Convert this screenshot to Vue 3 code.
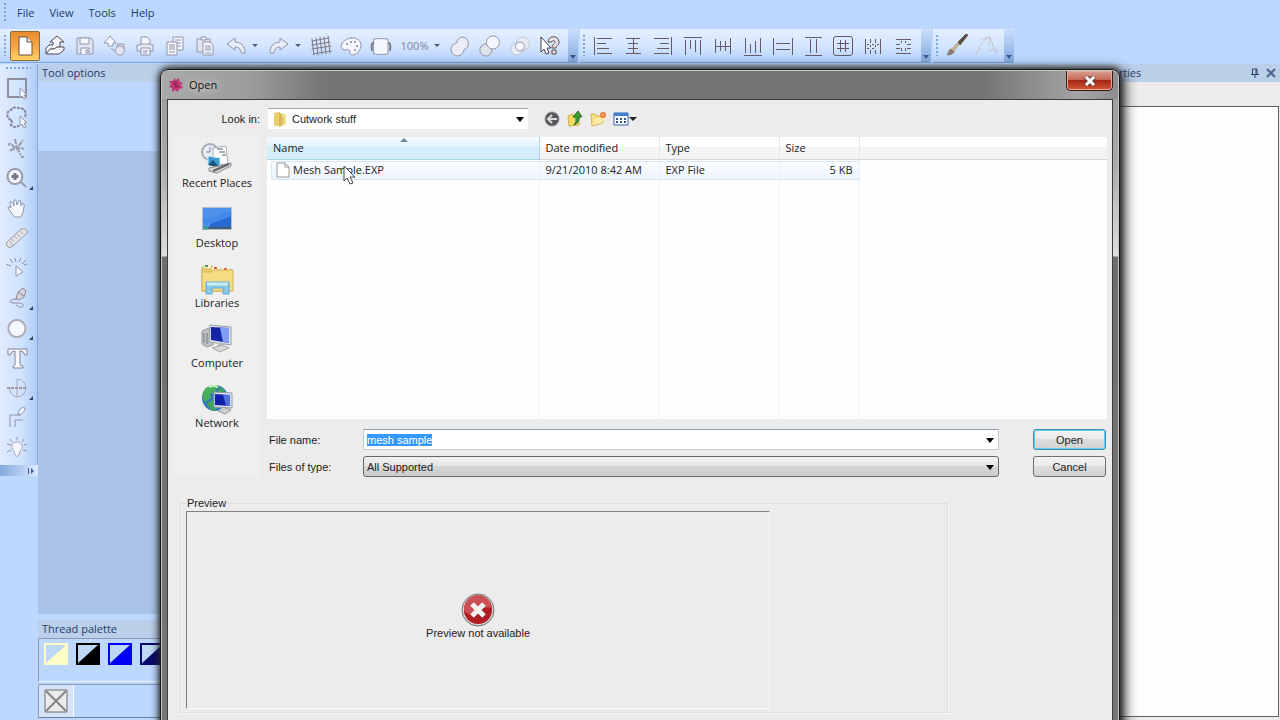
<script setup>
import {onMounted, ref} from "vue";

const menus=['File','View','Tools','Help']

// 每个图标由若干路径组成: d 路径, f 填充, s 描边
const G='#9294a8'
const W='#f4f7fd'
const D='#655a68'

const fileIcons=[
  {name:'Open design',parts:[{d:'M1 18V12L4 9H8V6H5L12 0L19 6H15V10L11 13H6L4 16',f:W,s:'#554650'},{d:'M1 18L5 13H9L12 11H19V14L14 18Z',f:W,s:'#554650'}]},
  {name:'Save',parts:[{d:'M2 2H16L18 4V18H2Z',f:'#dfe5f2',s:G},{d:'M5 2H14V8H5Z',f:W,s:G},{d:'M6 18V12H14V18M11 14H13V17H11Z',f:W,s:G}]},
  {name:'Convert',parts:[{d:'M-1 7L5 0L11 7H8V10H3V7Z',f:W,s:G},{d:'M6 12L10 15',s:G},{d:'M12 8H19V13H12Z',f:'#d6dbe8',s:G},{d:'M15 10A4.5 4.5 0 1 1 14.9 10Z',f:'#e2e6f2',s:G}]},
  {name:'Print',parts:[{d:'M6 8V1H12L15 4V8',f:W,s:G},{d:'M2 9H5L6 8H15L16 9H18V15H2Z',f:'#e6eaf4',s:G},{d:'M6 12H15V19H6Z',f:W,s:G},{d:'M8 15H13M8 17H12',s:G}]},
  {name:'Copy',parts:[{d:'M8 1H18V14H8Z',f:W,s:G},{d:'M10 4H16M10 7H16M10 10H16',s:G},{d:'M2 6H12V19H2Z',f:W,s:G},{d:'M4 9H10M4 11H10M4 13H10M4 16H10',s:G}]},
  {name:'Paste',parts:[{d:'M2 3H15V16H2Z',f:'#dfe4f1',s:G},{d:'M6 1H11V4H6Z',f:W,s:G},{d:'M8 6H15L18 9V19H8Z',f:W,s:G},{d:'M10 10H16M10 12H16M10 14H16M10 17H16',s:G}]}
]
const undoIcons=[
  {name:'Undo',parts:[{d:'M1 8L9 2V6C15 6 19 10 19 17H15C15 13 13 11 9 11V14Z',f:'#e9edf7',s:G}]},
  {name:'Redo',parts:[{d:'M19 8L11 2V6C5 6 1 10 1 17H5C5 13 7 11 11 11V14Z',f:'#e9edf7',s:G}]}
]
const viewIcons=[
  {name:'Grid',parts:[{d:'M5 2L7 19M9 1L11 18M13 1L15 18M17 0L19 17M1 5L18 2M1 9L19 6M1 13L20 10M2 18L20 15M1 3L3 19',s:'#7d7a88'}]},
  {name:'Colors',parts:[{d:'M10 2C16 1 20 5 20 9C20 14 16 19 11 19C8 19 10 15 8 14C6 13 4 15 1 13C-2 9 3 3 10 2Z',f:W,s:G},{d:'M6 8h.1M10 6h.1M14 6h.1M16 10h.1M14 14h.1',s:'#8b8d9e',w:2}]},
  {name:'Hoop',parts:[{d:'M3 3Q10 2 17 3V18Q10 19 3 18Z',f:W,s:G},{d:'M2 7Q0 8 1 14M18 7Q20 8 19 14',s:'#777a8c',w:2}]}
]
const shapeIcons=[
  {name:'Weld',parts:[{d:'M13 1A6.5 6.5 0 0 1 14 13.5A6.5 6.5 0 1 1 6.5 7A6.5 6.5 0 0 1 13 1Z',f:'#e9ecf3',s:G}]},
  {name:'Exclude',parts:[{d:'M6 8A6 6 0 1 1 5.9 8Z',f:'#dfe3ec',s:G},{d:'M13 0A6.5 6.5 0 1 1 12.9 0Z',f:W,s:G}]},
  {name:'Intersect',parts:[{d:'M13 1A6.5 6.5 0 1 1 12.9 1ZM7 7A6 6 0 1 1 6.9 7Z',f:'#e6eaf4',s:'#c2c5d4'},{d:'M10 6A4.5 4.5 0 1 1 9.9 6Z',f:W,s:G}]},
  {name:'Help pointer',parts:[{d:'M8 6C8 -1 19 -1 19 6C19 10 16 9 16 12H12C12 8 15 8 15 6S12 4 12 6ZM12 14H16V18H12Z',f:'#e6e1e4',s:'#5b4b52'},{d:'M1 1V16L4 13L6 18L9 17L7 12H11Z',f:'#fff',s:'#4a3d44'}]}
]
const alignIcons=[
  {name:'Align left',parts:[{d:'M1.5 1V19M4 2.5H19M4 7.5H13M4 12.5H16M4 17.5H19',s:D}]},
  {name:'Align center',parts:[{d:'M3 2.5H17M5 7.5H15M5 12.5H15M3 17.5H18M10.5 3V17',s:D}]},
  {name:'Align right',parts:[{d:'M18.5 1V19M1 2.5H16M7 7.5H16M4 12.5H16M1 17.5H16',s:D}]},
  {name:'Align top',parts:[{d:'M1 1.5H19M2.5 4V19M7.5 4V13M12.5 4V16M17.5 4V19',s:D}]},
  {name:'Align middle',parts:[{d:'M2.5 3V17M7.5 5V15M12.5 5V15M17.5 2V18M3 10.5H17',s:D}]},
  {name:'Align bottom',parts:[{d:'M1 19.5H19M2.5 2V17M7.5 8V17M12.5 5V17M17.5 2V17',s:D}]},
  {name:'Same width',parts:[{d:'M.5 2V19M19.5 2V19M3 7.5H17M3 13.5H17',s:D}]},
  {name:'Same height',parts:[{d:'M2 1.5H19M2 19.5H19M7.5 3V17M13.5 3V17',s:D}]},
  {name:'Center in hoop',parts:[{d:'M3 .5H17Q19.5 .5 19.5 3V17Q19.5 19.5 17 19.5H3Q.5 19.5 .5 17V3Q.5 .5 3 .5ZM4 7.5H16M4 12.5H16M7.5 4V16M12.5 4V16',s:D}]},
  {name:'Space across',parts:[{d:'M2.5 3V18M7.5 3V7M7.5 9V11M7.5 14V18M12.5 3V7M12.5 9V11M12.5 14V18M17.5 3V18M4 8.5H6M9 8.5H11M14 8.5H16M4 12.5H6M9 12.5H11',s:D}]},
  {name:'Space down',parts:[{d:'M3 3.5H18M3 8.5H7M14 8.5H18M3 12.5H7M14 12.5H18M3 17.5H18M8.5 5V7M12.5 5V7M8.5 12V15M12.5 12V15',s:D}]}
]
const penIcons=[
  {name:'Brush',parts:[{d:'M1 19C3 17 2 14 5 13L8 15C8 18 4 19 1 19Z',f:'#8d7862',s:'#8d8178'},{d:'M6 13L11 7L13 9L8 15Z',f:'#c8b98f',s:'#b6ab93'},{d:'M12 6L20 -2L22 -1L14 9Z',f:'#5b4c42',s:'#6c5e55'}]},
  {name:'Stitch',parts:[{d:'M0 18Q8 2 14 1M5 3L14 1L13 10M14 1L20 18M12 16Q20 10 22 17',s:'#c5c3ca'}]}
]
const sideIcons=[
  {name:'Rectangle select',parts:[{d:'M1 1H19V19H1Z',s:'#8d8e9f',w:2},{d:'M13 10V20L15 18L17 21L19 20L17 17H20Z',f:W,s:G}]},
  {name:'Freehand select',parts:[{d:'M4 12C-1 10 -1 3 4 2C6 -2 10 0 12 0C17 0 20 4 18 9M4 12L5 14L4 17L7 19L12 18',s:'#85869a',w:2,dash:'3 1'},{d:'M13 8V18L15 16L17 20L19 19L17 15H20Z',f:W,s:G}]},
  {name:'Point',parts:[{d:'M8 1L10 10L16 2M1 6L3 7M3 13Q9 8 17 11M8 10L3 5M10 10L14 17M14 19h3',s:'#9c9bac',w:2,dash:'5 1'}]},
  {name:'Zoom',more:true,parts:[{d:'M8 1A7.5 7.5 0 1 1 7.9 1ZM14 14L19 19',f:W,s:'#9a9bab',w:2},{d:'M8 5V12M4.5 8.5H11.5',s:'#777789',w:3}]},
  {name:'Pan',parts:[{d:'M6 17L1 10Q1 7 4 10L3 4Q5 2 7 8L7 2Q9 0 10 7L12 2Q14 1 14 8L16 5Q18 5 17 9Q17 14 14 19H8Z',f:W,s:G}]},
  {name:'Measure',parts:[{d:'M-1 15L14 1Q19 0 21 4L6 18Q1 22 -1 15Z',f:'#e2e3e9',s:'#9a98a3'},{d:'M4 11L7 13M7 8L10 11M10 6L13 9M13 3L16 6M6 18L3 13',s:'#aaa8b0'}]},
  {name:'Click',parts:[{d:'M9 8V18L16 14Z',f:W,s:G},{d:'M6 5L3 1M9 4L8 0M12 4L14 0M15 6L19 2M4 8L-1 6M17 7L20 6',s:'#8a899d'}]},
  {name:'Digitize',more:true,parts:[{d:'M9 11L11 4L16 0L19 3L17 9L12 12Z',f:'#d6d3d9',s:'#8a889a'},{d:'M11 4L17 8M9 11C1 12 2 15 7 15S18 15 16 18S11 18 9 17',s:'#8a889a'}]},
  {name:'Ellipse',more:true,parts:[{d:'M10 2A8.5 8.5 0 1 1 9.9 2Z',f:W,s:'#aeacb6',w:2}]},
  {name:'Text',parts:[{d:'M1 1H20V7H18Q17 3 13 3V16Q13 18 16 18V20H6V18Q8 18 8 16V3Q4 3 3 7H1Z',f:W,s:'#85829a'}]},
  {name:'Arc',more:true,parts:[{d:'M10 1V19M10 1A9 9 0 0 1 10 19A8 8 0 0 1 3 10',s:'#a9a9b8'},{d:'M0 10H20',s:'#9d9bac',w:2,dash:'3 1'}]},
  {name:'Corner',parts:[{d:'M3 19V7H14M8 19V12H16',s:G},{d:'M11 7L12 3Q15 -2 18 0Q18 5 11 7Z',f:W,s:G}]},
  {name:'Ideas',parts:[{d:'M8 17L7 13C3 9 5 4 10 4S17 9 13 13L12 17Q10 20 8 17Z',f:W,s:'#a9a9b8'},{d:'M10 -1V2M3 1L5 4M17 1L15 4M0 6L4 7M20 6L17 7M0 14L4 12M20 13L16 12',s:G}]}
]

const places=['Recent Places','Desktop','Libraries','Computer','Network']
const threads=[
  {name:'Cream',color:'#fdfdc6'},
  {name:'Black',color:'#000000'},
  {name:'Blue',color:'#0000f4'},
  {name:'Navy',color:'#0a0a6c'}
]
const files=[{name:'Mesh Sample.EXP',date:'9/21/2010 8:42 AM',type:'EXP File',size:'5 KB'}]

const fileName=ref('mesh sample')
const nameInput=ref(null)
onMounted(()=>{
  nameInput.value.focus()
  nameInput.value.select()
})
</script>

<template>
  <div class="app">
    <nav class="menubar">
      <span class="grip"></span>
      <button v-for="item in menus" :key="item" class="menu">{{ item }}</button>
    </nav>

    <!--    工具栏-->
    <div class="toolbars">
      <div class="toolbar">
        <span class="grip"></span>
        <button class="tool tool-active" aria-label="New">
          <svg width="20" height="20" viewBox="0 0 20 20"><path d="M4 1H12L17 6V19H4Z" fill="#fff" stroke="#6b5148"/><path d="M12 1V6H17" fill="#eee" stroke="#6b5148"/></svg>
        </button>
        <button v-for="icon in fileIcons" :key="icon.name" class="tool" :aria-label="icon.name">
          <svg class="icon" viewBox="0 0 20 20"><path v-for="(p,i) in icon.parts" :key="i" :d="p.d" :fill="p.f||'none'" :stroke="p.s"/></svg>
        </button>
        <button v-for="icon in undoIcons" :key="icon.name" class="tool split" :aria-label="icon.name">
          <svg class="icon" viewBox="0 0 20 20"><path v-for="(p,i) in icon.parts" :key="i" :d="p.d" :fill="p.f||'none'" :stroke="p.s"/></svg>
          <i class="caret"></i>
        </button>
        <button v-for="icon in viewIcons" :key="icon.name" class="tool" :aria-label="icon.name">
          <svg class="icon" viewBox="0 0 20 20"><path v-for="(p,i) in icon.parts" :key="i" :d="p.d" :fill="p.f||'none'" :stroke="p.s" :stroke-width="p.w||1" stroke-linecap="round"/></svg>
        </button>
        <button class="tool zoom">100%<i class="caret"></i></button>
        <button v-for="icon in shapeIcons" :key="icon.name" class="tool" :aria-label="icon.name">
          <svg class="icon" viewBox="0 0 20 20"><path v-for="(p,i) in icon.parts" :key="i" :d="p.d" :fill="p.f||'none'" :stroke="p.s"/></svg>
        </button>
        <span class="cap"></span>
      </div>
      <div class="toolbar">
        <span class="grip"></span>
        <button v-for="icon in alignIcons" :key="icon.name" class="tool" :aria-label="icon.name">
          <svg class="icon" viewBox="0 0 20 20"><path v-for="(p,i) in icon.parts" :key="i" :d="p.d" :fill="p.f||'none'" :stroke="p.s"/></svg>
        </button>
        <span class="cap"></span>
      </div>
      <div class="toolbar">
        <span class="grip"></span>
        <button v-for="icon in penIcons" :key="icon.name" class="tool" :aria-label="icon.name">
          <svg class="icon" viewBox="0 0 20 20"><path v-for="(p,i) in icon.parts" :key="i" :d="p.d" :fill="p.f||'none'" :stroke="p.s"/></svg>
        </button>
        <span class="cap"></span>
      </div>
    </div>

    <div class="body">
      <!--    左侧工具-->
      <div class="rail">
        <div class="rail-tools">
          <span class="grip-h"></span>
          <button v-for="icon in sideIcons" :key="icon.name" class="side-tool" :class="{'has-more':icon.more}" :aria-label="icon.name">
            <svg class="icon" viewBox="0 0 20 20"><path v-for="(p,i) in icon.parts" :key="i" :d="p.d" :fill="p.f||'none'" :stroke="p.s" :stroke-width="p.w||1" :stroke-dasharray="p.dash"/></svg>
          </button>
        </div>
        <div class="rail-cap"><svg width="8" height="8" viewBox="0 0 8 8"><path d="M1.5 1V7" stroke="#41608f"/><path d="M4 1L7 4L4 7Z" fill="#41608f"/></svg></div>
      </div>

      <main class="workspace">
        <h2 class="panel-title">Tool options</h2>
        <div class="options"></div>
        <div class="canvas"></div>
        <h2 class="panel-title">Thread palette</h2>
        <div class="threads">
          <button v-for="t in threads" :key="t.name" class="thread" :aria-label="t.name">
            <svg width="24" height="22" viewBox="0 0 24 22"><path d="M1 1H23V21H1Z" fill="#bcd8f4" :stroke="t.color" stroke-width="2"/><path d="M23 1V21H1Z" :fill="t.color"/></svg>
          </button>
        </div>
        <div class="current-thread">
          <button class="no-thread" aria-label="No thread">
            <svg width="24" height="24" viewBox="0 0 24 24"><path d="M1 1H23V23H1Z" fill="#ececec" stroke="#6f6f6f"/><path d="M2 2L22 22M22 2L2 22" stroke="#858585" stroke-width="2"/></svg>
          </button>
        </div>
      </main>

      <aside class="properties">
        <h2 class="panel-title">
          <span class="properties-name">Properties</span>
          <svg width="10" height="10" viewBox="0 0 10 10"><path d="M2.5 6V1H7V6M1 6.5H9M5 7V10M6 1V6" fill="none" stroke="#27446f"/></svg>
          <svg width="10" height="10" viewBox="0 0 10 10"><path d="M1 1L9 9M9 1L1 9" stroke="#4a668f" stroke-width="2"/></svg>
        </h2>
        <div class="sheet"></div>
      </aside>
    </div>

    <!--    打开文件窗口-->
    <section class="dialog" aria-label="Open">
      <header class="titlebar">
        <svg width="14" height="14" viewBox="0 0 14 14"><path d="M5 0L7 2L10 0L11 4L14 5L12 7L14 10L10 11L9 14L6 12L3 14L3 10L0 9L2 6L0 3L4 3Z" fill="#c03876"/><path d="M7 3V10M4 5L10 9" stroke="#7c1c4c"/></svg>
        <h1>Open</h1>
        <button class="close" aria-label="Close">
          <svg width="12" height="10" viewBox="0 0 12 10"><path d="M2 1L10 9M10 1L2 9" stroke="#5a3a3a" stroke-width="5"/><path d="M2 1L10 9M10 1L2 9" stroke="#fff" stroke-width="3"/></svg>
        </button>
      </header>

      <div class="client">
        <div class="lookin">
          <label for="lookin">Look in:</label>
          <div class="combo look-combo">
            <svg class="folder" width="14" height="16" viewBox="0 0 14 16"><path d="M1 2L6 1V15H1Z" fill="#e9cf6d"/><path d="M6 3H13V14L6 15Z" fill="#f3e08d"/><path d="M6 1L9 3V15L6 16Z" fill="#d8b955"/><path d="M10 6V13" stroke="#cbb25a"/></svg>
            <select id="lookin"><option>Cutwork stuff</option></select>
          </div>
          <div class="nav-tools">
            <button aria-label="Back"><svg width="16" height="16" viewBox="0 0 16 16"><circle cx="8" cy="8" r="7" fill="#55585c" stroke="#8c8f92"/><path d="M13 8H4M8 4L4 8L8 12" fill="none" stroke="#dadada" stroke-width="2"/></svg></button>
            <button aria-label="Up one level"><svg width="16" height="16" viewBox="0 0 16 16"><path d="M1 5L6 3V6H12V14L2 15Z" fill="#f4dc68" stroke="#cfae48"/><path d="M7 14Q10 11 9 6H6L11 0L15 6H12Q13 11 7 14Z" fill="#3c9a3a" stroke="#25702a"/></svg></button>
            <button aria-label="New folder"><svg width="16" height="16" viewBox="0 0 16 16"><path d="M1 3H5L7 5H13V12L2 15Z" fill="#f7dd80" stroke="#d7b456"/><path d="M2 14L5 7H15L12 12Z" fill="#fbeaa8"/><circle cx="13" cy="4" r="3" fill="#ee7b3a"/><circle cx="13" cy="4" r="1" fill="#ffd39a"/></svg></button>
            <button class="views" aria-label="View menu"><svg width="16" height="14" viewBox="0 0 16 14"><path d="M1 1H15V13H1Z" fill="#fff" stroke="#2d63b3"/><path d="M1 2.5H15" stroke="#3f7ed0" stroke-width="3"/><path d="M3 7h2M7 7h2M11 7h2M3 10h2M7 10h2M11 10h2" stroke="#31598f" stroke-width="2"/></svg><i class="caret"></i></button>
          </div>
        </div>

        <nav class="places">
          <button v-for="(place,index) in places" :key="place" class="place">
            <svg width="34" height="32" viewBox="0 0 34 32">
              <g v-if="index===0">
                <circle cx="10" cy="9" r="8" fill="#e8ebf1" stroke="#a7abb5" stroke-width="2"/><path d="M10 4V9H6" fill="none" stroke="#8189a8"/>
                <path d="M13 5L26 3L28 21L13 22Z" fill="#fafafa" stroke="#a9adb2"/><path d="M17 6H23M19 9H25M22 12H26" stroke="#54606e"/>
                <path d="M8 13L20 15V25L8 22Z" fill="#3c9bd2" stroke="#d5e9f4"/><path d="M8 22L13 17L20 25Z" fill="#1e5673"/>
                <path d="M9 25L23 22L31 20V23L17 30L9 28Z" fill="#d6d7d9" stroke="#898b8e"/><path d="M13 28L29 21" stroke="#62666b" stroke-width="2"/>
              </g>
              <g v-if="index===1">
                <path d="M2 4H32V27H2Z" fill="#b2c0cf"/><path d="M3 5H31V24H3Z" fill="#2769d2"/><path d="M3 5H31V9Q16 10 9 24H3Z" fill="#4e91eb"/><path d="M3 16Q13 15 31 8V13Q17 20 3 21Z" fill="#418ae9"/><path d="M3 25H31" stroke="#445d70" stroke-width="2"/><path d="M3 25H8" stroke="#3d9a95" stroke-width="3"/>
              </g>
              <g v-if="index===2">
                <path d="M2 5L4 3H12L14 6H31V28H2Z" fill="#e8cb60" stroke="#c5a74a"/><path d="M4 2H11V5H4ZM12 4H20V7H12ZM21 5H30V8H21Z" fill="#f8f6df"/><path d="M14 5H17M24 6H27" stroke="#cf5e43" stroke-width="2"/><path d="M5 3H8" stroke="#479b57" stroke-width="2"/>
                <path d="M2 9H11L13 7H33V28H2Z" fill="#f5dc80" stroke="#cfb25a"/><path d="M6 19H29V31H23V25H12V31H6Z" fill="#86c9e9" stroke="#62abd6"/><path d="M7 21H28" stroke="#c8edf9" stroke-width="3"/>
              </g>
              <g v-if="index===3">
                <path d="M2 8L9 5L13 7V22L7 24L2 21Z" fill="#c0c2c4" stroke="#96999c"/><path d="M4 10V20M7 10V21" stroke="#777b81"/><path d="M10 2L31 4V22L9 19Z" fill="#dce0e8" stroke="#969fae"/><path d="M11 4L29 5V20L11 17Z" fill="#1523a9"/><path d="M20 5L29 5V20L23 19Z" fill="#809ef2"/><path d="M18 20L24 21L23 25H17Z" fill="#b9bdc2"/><path d="M12 25L22 22L29 25L20 29Z" fill="#d6d8da" stroke="#aaa"/>
              </g>
              <g v-if="index===4">
                <circle cx="15" cy="15" r="13" fill="#337ab8"/><path d="M5 6Q11 0 19 3L15 9L10 11L11 15L5 19Q2 15 3 9Z" fill="#48ae59"/><path d="M7 20L13 17L18 22L15 28Q9 27 7 20ZM20 4L26 9L22 14L18 8Z" fill="#41a259"/><path d="M9 4Q14 2 18 4" stroke="#c5f3c5" stroke-width="2" fill="none"/>
                <path d="M14 9L32 10V25L14 24Z" fill="#dde1ea" stroke="#8e9bae"/><path d="M15 11L30 12V23L15 22Z" fill="#111eaa"/><path d="M23 12L30 12V23L26 23Z" fill="#4e70df"/><path d="M18 28L23 24L31 27L25 31Z" fill="#cccfd3" stroke="#999"/>
              </g>
            </svg>
            <span>{{ place }}</span>
          </button>
        </nav>

        <div class="list">
          <table>
            <colgroup><col class="col-name"><col class="col-date"><col class="col-type"><col class="col-size"><col></colgroup>
            <thead>
              <tr><th class="sorted">Name</th><th>Date modified</th><th>Type</th><th>Size</th><th></th></tr>
            </thead>
            <tbody>
              <tr v-for="file in files" :key="file.name" class="file">
                <td>
                  <div class="file-name">
                    <svg width="14" height="16" viewBox="0 0 14 16"><path d="M1 1H9L13 5V15H1Z" fill="#fff" stroke="#9a9a9a"/><path d="M9 1V5H13" fill="none" stroke="#9a9a9a"/></svg>
                    {{ file.name }}
                  </div>
                </td>
                <td><div>{{ file.date }}</div></td>
                <td><div>{{ file.type }}</div></td>
                <td><div class="file-size">{{ file.size }}</div></td>
                <td></td>
              </tr>
              <tr class="blank"><td></td><td></td><td></td><td></td><td></td></tr>
            </tbody>
          </table>
          <svg class="pointer" width="14" height="20" viewBox="0 0 14 20"><path d="M1 1V16L4 13L7 19L10 18L7 12H12Z" fill="#fff" stroke="#444"/></svg>
        </div>

        <form class="fields" @submit.prevent>
          <label for="filename">File name:</label>
          <div class="combo name-combo"><input id="filename" ref="nameInput" v-model="fileName" type="text" autocomplete="off"></div>
          <button class="push push-default">Open</button>
          <label for="filetype">Files of type:</label>
          <div class="combo type-combo"><select id="filetype"><option>All Supported</option></select></div>
          <button class="push" type="button">Cancel</button>
        </form>

        <fieldset class="preview">
          <legend>Preview</legend>
          <div class="preview-box">
            <svg width="34" height="34" viewBox="0 0 34 34"><circle cx="17" cy="17" r="16" fill="#d5d2d2" stroke="#737373"/><circle cx="17" cy="17" r="14" fill="#b01c24"/><path d="M3 17A14 14 0 0 1 31 15Q20 13 14 21Q8 24 3 17Z" fill="#cb5054"/><path d="M11 11L23 23M23 11L11 23" stroke="#f3f1f1" stroke-width="5"/></svg>
            <p>Preview not available</p>
          </div>
        </fieldset>
      </div>
    </section>
  </div>
</template>

<style>
body {
  margin: 0;
}
</style>

<style scoped>
.app {
  position: relative;
  display: flex;
  flex-direction: column;
  height: 100vh;
  overflow: hidden;
  background: #bcd8ff;
  color: #1f3c69;
  font-family: "Open Sans", sans-serif;
  font-size: 11px;
  line-height: 16px;
}

button, input, select {
  margin: 0;
  padding: 0;
  border: 0;
  background: none;
  color: inherit;
  font: inherit;
}

h1, h2, p {
  margin: 0;
  font-size: inherit;
  font-weight: normal;
}

svg {
  display: block;
  flex: none;
}

.icon {
  width: 20px;
  height: 20px;
  overflow: visible;
}

.menubar {
  display: flex;
  align-items: center;
  height: 26px;
  padding-bottom: 3px;
}

.menu {
  padding: 0 7px;
  margin-right: 1px;
}

.grip {
  align-self: stretch;
  width: 2px;
  margin: 6px 4px;
  background: repeating-linear-gradient(#7fa3d5 0 2px, transparent 2px 4px);
}

.menubar .grip {
  margin: 3px 4px;
}

.toolbars {
  display: flex;
  gap: 2px;
  height: 34px;
}

.toolbar {
  display: flex;
  background: linear-gradient(#e3efff, #d5e6ff 50%, #b4d1fb);
  border-bottom: 1px solid #7ba4dd;
  box-sizing: border-box;
}

.toolbar .grip {
  margin: 6px 3px;
}

.toolbar:first-child .grip {
  margin: 6px 4px;
}

.tool {
  display: flex;
  align-items: center;
  justify-content: center;
  width: 30px;
}

.tool-active {
  height: 30px;
  margin-top: 2px;
  box-sizing: border-box;
  border: 1px solid #8e6a36;
  border-radius: 2px;
  background: linear-gradient(#e98d30, #f3a547 50%, #ffd268);
}

.split {
  width: 43px;
  gap: 6px;
}

.zoom {
  width: 49px;
  gap: 6px;
  color: #82849a;
}

.caret {
  border: 3px solid transparent;
  border-top-color: #4d5b79;
  border-bottom: 0;
}

.cap {
  display: flex;
  align-items: flex-end;
  justify-content: center;
  width: 10px;
  margin-left: 3px;
  background: linear-gradient(#c9dffd, #83a9dd);
  border-radius: 0 3px 3px 0;
}

.cap::after {
  content: '';
  margin-bottom: 3px;
  border: 3px solid transparent;
  border-top: 4px solid #35588f;
  border-bottom: 0;
}

.body {
  display: flex;
  flex: 1;
  min-height: 0;
  padding-top: 1px;
}

.rail {
  width: 38px;
}

.rail-tools {
  display: flex;
  flex-direction: column;
  width: 37px;
  padding-bottom: 2px;
  background: linear-gradient(90deg, #dfebff, #cfe2ff 60%, #aecbf6);
  border-right: 1px solid #85a9de;
  border-radius: 3px 0 0 3px;
}

.grip-h {
  height: 2px;
  margin: 3px 6px 4px;
  background: repeating-linear-gradient(90deg, #7fa3d5 0 2px, transparent 2px 4px);
}

.side-tool {
  position: relative;
  display: flex;
  align-items: center;
  height: 30px;
  padding-left: 7px;
}

.has-more::after {
  content: '';
  position: absolute;
  right: 4px;
  bottom: 3px;
  border-left: 4px solid transparent;
  border-bottom: 4px solid #31425f;
}

.rail-cap {
  display: flex;
  align-items: center;
  justify-content: flex-end;
  height: 11px;
  padding-right: 3px;
  background: linear-gradient(90deg, #83a8dc, #dbe9ff);
}

.workspace {
  display: flex;
  flex: 1;
  flex-direction: column;
}

.panel-title {
  height: 18px;
  padding: 0 4px;
  line-height: 18px;
  background: #bacfe8;
}

.options {
  height: 69px;
}

.canvas {
  flex: 1;
  margin-bottom: 6px;
  background: #a9c4e8;
}

.threads {
  display: flex;
  align-items: flex-start;
  gap: 8px;
  height: 38px;
  padding: 4px 5px 0;
  border: 1px solid #8a9ab0;
  border-bottom-color: #eef5ff;
}

.current-thread {
  display: flex;
  height: 32px;
  margin-top: 2px;
  margin-bottom: 2px;
  border: 1px solid #8a9ab0;
  border-bottom-color: #6d7f99;
}

.no-thread {
  padding: 0 5px;
  background: #d5e4f8;
  border-right: 1px solid #fff;
}

.properties {
  display: flex;
  flex-direction: column;
  width: 260px;
  background: #ececec;
}

.properties .panel-title {
  display: flex;
  align-items: center;
  gap: 6px;
}

.properties-name {
  flex: 1;
  padding-left: 64px;
}

.sheet {
  flex: 1;
  margin: 24px 1px 3px 0;
  border: 1px solid #606060;
  background: #fefefe;
}

.dialog {
  position: absolute;
  top: 69px;
  left: 160px;
  right: 160px;
  bottom: -40px;
  display: flex;
  flex-direction: column;
  padding: 0 7px;
  border: 1px solid #161616;
  border-radius: 8px 8px 0 0;
  background: linear-gradient(#9a9a9a, #a8a8a8 90px, #dedede 186px, #6f6f6f 187px, #777);
  box-shadow: inset 0 0 0 1px #c5c5c5, 0 0 6px 1px #222, 4px 2px 14px #222;
  color: #222;
}

.titlebar {
  display: flex;
  align-items: center;
  gap: 6px;
  height: 28px;
  margin: 1px -6px 0;
  padding-left: 7px;
  border-radius: 6px 6px 0 0;
  background: linear-gradient(90deg, #a9a9a9, #9d9d9d 9%, #757575 17%, #747576 86%, #a5a5a5 96%, #8d8d8d);
}

.titlebar h1 {
  flex: 1;
  color: #111;
  text-shadow: 0 0 6px #ddd, 0 0 8px #ccc;
}

.close {
  display: flex;
  align-items: center;
  justify-content: center;
  align-self: flex-start;
  width: 47px;
  height: 20px;
  margin-right: 5px;
  border: 1px solid #3b1613;
  border-top: 0;
  border-radius: 0 0 5px 5px;
  background: linear-gradient(#d9a093, #c66450 48%, #a42713 50%, #d45738);
  box-shadow: inset 0 0 0 1px #e4aca0;
}

.client {
  display: grid;
  grid-template-columns: 99px 1fr;
  grid-template-rows: 37px 282px auto auto;
  flex: 1;
  align-content: start;
  padding-right: 5px;
  border: 1px solid #3c3c3c;
  border-bottom: 0;
  margin: 0 -1px;
  background: #ececec;
  font-family: "Liberation Sans", sans-serif;
}

.lookin {
  grid-column: 1 / 3;
  display: flex;
  align-items: center;
}

.lookin label {
  width: 92px;
  margin-right: 8px;
  text-align: right;
}

.combo {
  position: relative;
  display: flex;
  align-items: center;
  box-sizing: border-box;
  height: 21px;
  background: #fff;
}

.combo::after {
  content: '';
  position: absolute;
  right: 4px;
  top: 8px;
  border: 4px solid transparent;
  border-top: 5px solid #000;
  border-bottom: 0;
  pointer-events: none;
}

.combo select, .combo input {
  flex: 1;
  min-width: 0;
  height: 100%;
  padding: 0 20px 0 3px;
  appearance: none;
  outline: none;
}

.combo input::selection {
  background: #3399ff;
  color: #fff;
}

.look-combo {
  width: 260px;
  border-top: 1px solid #a5a5a5;
}

.look-combo select {
  padding-left: 24px;
}

.folder {
  position: absolute;
  left: 5px;
  pointer-events: none;
}

.nav-tools {
  display: flex;
  gap: 7px;
  margin-left: 16px;
}

.views {
  display: flex;
  align-items: center;
}

.views .caret {
  border-width: 4px 4px 0;
  border-top-color: #222;
}

.places {
  grid-row: 2 / 4;
  margin: 0 7px 0 6px;
  background: #efefef;
  font-family: "Open Sans", sans-serif;
}

.place {
  display: flex;
  flex-direction: column;
  align-items: center;
  width: 100%;
  height: 60px;
  padding-top: 6px;
}

.list {
  position: relative;
  background: #fefefe;
  font-family: "Open Sans", sans-serif;
}

table {
  width: 100%;
  height: 100%;
  table-layout: fixed;
  border-collapse: collapse;
}

.col-name {
  width: 272px;
}

.col-date, .col-type {
  width: 120px;
}

.col-size {
  width: 80px;
}

th {
  position: relative;
  height: 22px;
  padding: 0 6px;
  border-right: 1px solid #e2e6ea;
  border-bottom: 1px solid #d5d5d5;
  background: linear-gradient(#fff 45%, #f3f4f5 46%);
  font-weight: normal;
  text-align: left;
}

th:last-child, td:last-child {
  border-right: 0;
}

.sorted {
  border-color: #a9d5ea;
  background: linear-gradient(#f2fafd, #dff2fa 45%, #d2ecf8 46%, #d8eff9);
}

.sorted::after {
  content: '';
  position: absolute;
  top: 1px;
  left: 49%;
  border: 4px solid transparent;
  border-bottom-color: #6d8a9a;
  border-top: 0;
}

td {
  padding: 0;
  border-right: 1px solid #f0f3f6;
}

.file {
  height: 20px;
}

.file td {
  vertical-align: bottom;
}

.file div {
  height: 17px;
  padding: 0 6px;
  border: 1px solid #d3e6f7;
  border-width: 1px 0;
  background: linear-gradient(#fafcff, #edf5fd);
}

.file .file-name {
  display: flex;
  align-items: center;
  gap: 3px;
  margin-left: 4px;
  padding-left: 4px;
  border-left-width: 1px;
  border-radius: 3px 0 0 3px;
}

.file .file-size {
  text-align: right;
}

.pointer {
  position: absolute;
  left: 76px;
  top: 28px;
}

.fields {
  display: grid;
  grid-template-columns: 94px 1fr 73px;
  align-items: center;
  row-gap: 6px;
  padding: 10px 1px 0 2px;
}

.name-combo, .type-combo {
  margin-right: 34px;
}

.name-combo {
  border: 1px solid #c3cbd3;
  border-top-color: #8fa0b0;
}

.type-combo {
  border: 1px solid #686868;
  border-radius: 3px;
  background: linear-gradient(#f1f1f1, #e5e5e5 48%, #d7d7d7 50%, #cccccc);
}

.push {
  height: 21px;
  border: 1px solid #707070;
  border-radius: 3px;
  background: linear-gradient(#f3f3f3, #ebebeb 48%, #dddddd 50%, #d2d2d2);
}

.push-default {
  border-color: #3c8fb5;
  box-shadow: inset 0 0 0 1px #5fcdee;
}

.preview {
  grid-column: 1 / 3;
  min-width: 0;
  margin: 18px 159px 0 12px;
  padding: 0 5px 3px;
  border: 1px solid #dedede;
  box-shadow: inset 1px 0 #f8f8f8, 1px 1px #f8f8f8;
}

.preview legend {
  padding: 0 1px;
}

.preview-box {
  display: flex;
  flex-direction: column;
  align-items: center;
  justify-content: center;
  width: 77%;
  height: 182px;
  padding-top: 14px;
  border: 1px solid #fafafa;
  border-top-color: #808080;
  border-left-color: #808080;
}

.preview-box p {
  margin-top: -2px;
}
</style>
